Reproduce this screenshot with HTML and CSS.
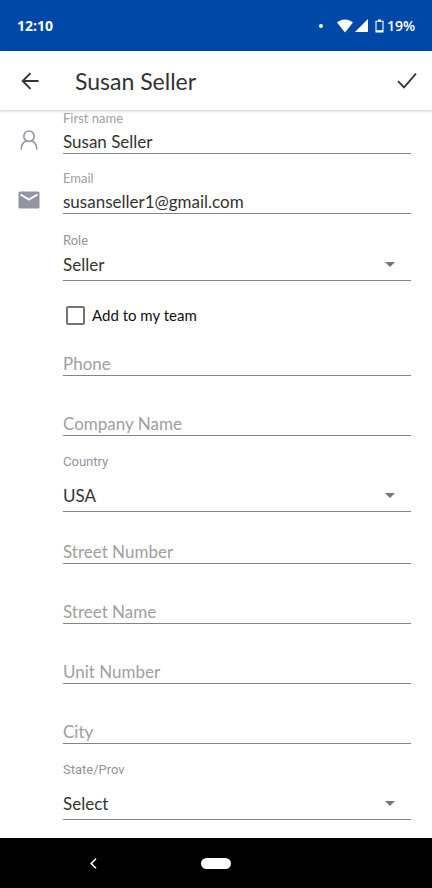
FILE: index.html
```html
<!DOCTYPE html>
<html lang="en">
<head>
<meta charset="utf-8">
<meta name="viewport" content="width=device-width, initial-scale=1">
<title>Susan Seller</title>
<link rel="stylesheet" href="styles.css">
</head>
<body>
<div class="status">
  <span class="clock">12:10</span>
  <div class="indicators">
    <span class="dot"></span>
    <svg class="wifi" width="16" height="14" viewBox="0 0 16 14"><path d="M0 3.6C4.8-.5 11.2-.5 16 3.6L8 13.6z" fill="#fff"/></svg>
    <svg width="13" height="13" viewBox="0 0 13 13"><path d="M13 0v13H0z" fill="#fff"/></svg>
    <svg class="battery" width="9" height="14" viewBox="0 0 9 14"><path d="M1 2.2h7V13H1z" fill="none" stroke="#fff" stroke-width="1.1"/><path d="M3 .5h3v1.700H3zM1 11.200h7V13H1z" fill="#fff"/></svg>
    <span>19%</span>
  </div>
</div>
<header class="appbar">
  <button class="icon-btn" type="button" aria-label="Back">
    <svg width="18" height="18" viewBox="0 0 18 18" fill="none" stroke="#333" stroke-width="1.9"><path d="M17.500 9H2M9.500 1.200L1.700 9l7.800 7.800"/></svg>
  </button>
  <h1>Susan Seller</h1>
  <button class="icon-btn" type="submit" form="contact" aria-label="Save">
    <svg width="20" height="18" viewBox="0 0 20 18" fill="none" stroke="#333" stroke-width="1.700"><path d="M1 9.200l6 6.200L19 1.600"/></svg>
  </button>
</header>
<main>
<form id="contact" class="form">
  <div class="field">
    <svg class="lead person" width="18" height="20" viewBox="0 0 18 20" fill="none" stroke="#9294a6" stroke-width="1.600"><circle cx="9" cy="6.200" r="5.200"/><path d="M1.200 19.600c0-4.600 2.400-7.600 5.200-8.600M16.800 19.600c0-4.600-2.400-7.600-5.200-8.600"/></svg>
    <label for="name">First name</label>
    <input id="name" type="text" value="Susan Seller">
  </div>
  <div class="field second">
    <svg class="lead" width="22" height="18" viewBox="0 0 22 18"><rect x=".5" y=".5" width="21" height="17" rx="1.500" fill="#9294a6"/><path d="M2.500 3.500L11 8.700l8.500-5.200" fill="none" stroke="#fff" stroke-width="2"/></svg>
    <label for="email">Email</label>
    <input id="email" type="email" value="susanseller1@gmail.com">
  </div>
  <div class="field choice">
    <label for="role">Role</label>
    <div class="select"><select id="role"><option>Seller</option></select></div>
  </div>
  <label class="check"><input type="checkbox">Add to my team</label>
  <div class="field phone"><input type="tel" placeholder="Phone" aria-label="Phone"></div>
  <div class="field bare"><input type="text" placeholder="Company Name" aria-label="Company Name"></div>
  <div class="field choice tall">
    <label for="country">Country</label>
    <div class="select"><select id="country"><option>USA</option></select></div>
  </div>
  <div class="field street"><input type="text" placeholder="Street Number" aria-label="Street Number"></div>
  <div class="field bare"><input type="text" placeholder="Street Name" aria-label="Street Name"></div>
  <div class="field bare"><input type="text" placeholder="Unit Number" aria-label="Unit Number"></div>
  <div class="field bare"><input type="text" placeholder="City" aria-label="City"></div>
  <div class="field choice tall">
    <label for="state">State/Prov</label>
    <div class="select"><select id="state"><option>Select</option></select></div>
  </div>
</form>
</main>
<nav class="navbar">
  <button class="nav-back" type="button" aria-label="System back"><svg width="7" height="11" viewBox="0 0 7 11" fill="none" stroke="#fff" stroke-width="1.600"><path d="M6 .8L1.200 5.500 6 10.200"/></svg></button>
  <button class="home" type="button" aria-label="Home"></button>
  <span></span>
</nav>
</body>
</html>
```
FILE: styles.css
```css
* { box-sizing: border-box; }

body {
  margin: 0;
  min-height: 100vh;
  display: flex;
  flex-direction: column;
  background: #fff;
  color: #333;
  font-family: Lato, "Open Sans", sans-serif;
}

button { padding: 0; border: 0; background: none; }
svg { display: block; }

.status {
  height: 51px;
  padding: 0 17px;
  display: flex;
  align-items: center;
  justify-content: space-between;
  background: #0048a8;
  color: #fff;
  font: 600 14px/20px "Open Sans", sans-serif;
}
.clock { font-weight: 700; }
.indicators { display: flex; align-items: center; gap: 2px; }
.dot { width: 4px; height: 4px; margin-right: 12px; border-radius: 50%; background: #fff; }
.battery { margin: 0 1px 0 5px; }

.appbar {
  height: 59px;
  padding: 0 15px 0 21px;
  display: flex;
  align-items: center;
  background: #fff;
  box-shadow: 0 1px 3px rgba(0, 0, 0, .2);
}
.appbar h1 {
  flex: 1;
  margin: 0 0 0 36px;
  font-size: 23px;
  line-height: 28px;
  font-weight: 400;
}

main { flex: 1; padding: 0 21px 18px 63px; }
.form { display: flex; flex-direction: column; }

.field { position: relative; display: flex; flex-direction: column; }
.field label { font-size: 13px; line-height: 16px; color: #a0a0a4; }
.second { margin-top: 16px; }
.phone { margin-top: 21px; }
.bare { margin-top: 32px; }
.street { margin-top: 24px; }
.choice { margin-top: 18px; }
.choice label { color: #9294a0; }
.tall label { margin-bottom: 9px; font-family: Roboto, sans-serif; }

.lead { position: absolute; right: calc(100% + 23px); bottom: 5px; }
.person { right: calc(100% + 25px); bottom: 4px; }

.field input, .field select {
  width: 100%;
  margin: 0;
  border: 0;
  border-bottom: 1px solid #858585;
  border-radius: 0;
  outline: 0;
  background: none;
  color: #333;
  font: 400 17px/23px Lato, sans-serif;
  appearance: none;
}
.field input { height: 28px; padding: 4px 0 0; }
.field select { display: block; height: 33px; padding: 1px 0 0; }
.field input::placeholder { color: #a0a0a0; opacity: 1; }

.select { position: relative; }
.select::after {
  content: "";
  position: absolute;
  right: 16px;
  top: 14px;
  border: 5px solid transparent;
  border-top-color: #757575;
  border-bottom: 0;
  pointer-events: none;
}

.check {
  height: 24px;
  margin-top: 22px;
  padding-left: 3px;
  display: flex;
  align-items: center;
  gap: 7px;
  color: #111;
  font-size: 15px;
  line-height: 24px;
}
.check input {
  appearance: none;
  width: 19px;
  height: 19px;
  margin: 0;
  border: 2px solid #757575;
  border-radius: 2px;
}
.check input:checked { background: #0048a8; }

.navbar {
  height: 50px;
  display: grid;
  grid-template-columns: 1fr 30px 1fr;
  align-items: center;
  background: #000;
}
.nav-back { justify-self: center; padding: 8px; margin-right: 14px; }
.home { height: 11px; border-radius: 6px; background: #fff; }
```
